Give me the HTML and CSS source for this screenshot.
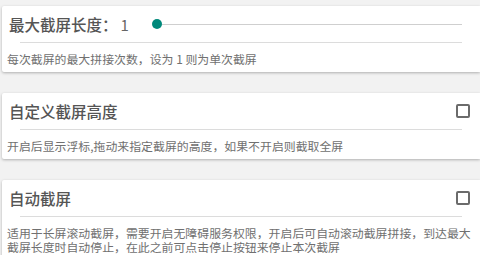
FILE: index.html
```html
<!DOCTYPE html>
<html lang="zh-CN">
<head>
    <meta charset="UTF-8">
    <title>截屏设置</title>
    <link rel="stylesheet" href="styles.css">
</head>
<body>
    <div class="list">
        <div class="card">
            <div class="card-head">
                <span class="card-title">最大截屏长度：</span>
                <span class="value">1</span>
                <div class="slider">
                    <span class="thumb"></span>
                    <span class="track"></span>
                </div>
            </div>
            <div class="divider"></div>
            <p class="desc">每次截屏的最大拼接次数，设为 1 则为单次截屏</p>
        </div>

        <div class="card">
            <div class="card-head">
                <span class="card-title">自定义截屏高度</span>
                <span class="checkbox"></span>
            </div>
            <div class="divider"></div>
            <p class="desc">开启后显示浮标,拖动来指定截屏的高度，如果不开启则截取全屏</p>
        </div>

        <div class="card">
            <div class="card-head">
                <span class="card-title">自动截屏</span>
                <span class="checkbox"></span>
            </div>
            <div class="divider"></div>
            <p class="desc">适用于长屏滚动截屏，需要开启无障碍服务权限，开启后可自动滚动截屏拼接，到达最大截屏长度时自动停止，在此之前可点击停止按钮来停止本次截屏</p>
        </div>
    </div>
</body>
</html>
```

FILE: styles.css
```css
body {
    margin: 0;
    background: #f2f2f2;
    font-family: "Noto Sans CJK SC", "Noto Sans", sans-serif;
    overflow: hidden;
}

.list {
    padding-top: 6px;
}

.card {
    margin: 0 0 21px 2px;
    background: #fff;
    box-shadow: 0 1px 3px rgba(0, 0, 0, 0.28);
    border-radius: 2px 0 0 2px;
}

.card-head {
    display: flex;
    align-items: center;
    height: 36px;
    padding: 0 10px 0 7px;
}

.card-title {
    font-size: 15.5px;
    font-weight: 500;
    color: #555;
}

.value {
    margin-left: 3px;
    font-size: 15px;
    color: #666;
}

.slider {
    flex: 1;
    display: flex;
    align-items: center;
    margin: 0 8px 0 23px;
}

.thumb {
    width: 10px;
    height: 10px;
    border-radius: 50%;
    background: #00897b;
}

.track {
    flex: 1;
    height: 1px;
    background: #cfcfcf;
}

.checkbox {
    margin-left: auto;
    width: 10px;
    height: 10px;
    border: 2px solid #6b6b6b;
    border-radius: 2px;
}

.divider {
    height: 1px;
    margin: 0 18px;
    background: #dcdcdc;
}

.desc {
    margin: 0;
    padding: 9px 6px 6px 5px;
    font-size: 11.9px;
    line-height: 14px;
    color: #707070;
}
```
